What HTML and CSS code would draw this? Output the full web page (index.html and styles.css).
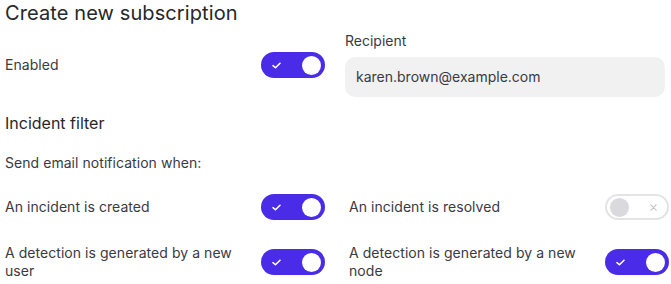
FILE: index.html
```html
<!DOCTYPE html>
<html>
<head>
<meta charset="utf-8">
<link rel="stylesheet" href="styles.css">
</head>
<body>
<div class="page">
  <h1 class="title">Create new subscription</h1>
  <div class="grid">
    <div class="row enabled-row">
      <span class="label">Enabled</span>
      <span class="toggle on"><svg class="check" viewBox="0 0 10 8" width="9" height="7"><path d="M1 4.2 L3.8 6.6 L9 1.4" fill="none" stroke="#fff" stroke-width="1.8" stroke-linecap="round" stroke-linejoin="round"/></svg><span class="knob"></span></span>
    </div>
    <div class="field">
      <div class="field-label">Recipient</div>
      <div class="input">karen.brown@example.com</div>
    </div>
  </div>
  <h2 class="section">Incident filter</h2>
  <p class="hint">Send email notification when:</p>
  <div class="grid options">
    <div class="row">
      <span class="label">An incident is created</span>
      <span class="toggle on"><svg class="check" viewBox="0 0 10 8" width="9" height="7"><path d="M1 4.2 L3.8 6.6 L9 1.4" fill="none" stroke="#fff" stroke-width="1.8" stroke-linecap="round" stroke-linejoin="round"/></svg><span class="knob"></span></span>
    </div>
    <div class="row right">
      <span class="label">An incident is resolved</span>
      <span class="toggle off"><span class="knob"></span><svg class="cross" viewBox="0 0 8 8" width="7" height="7"><path d="M1 1 L7 7 M7 1 L1 7" fill="none" stroke="#c4c4ca" stroke-width="1.4" stroke-linecap="round"/></svg></span>
    </div>
    <div class="row">
      <span class="label">A detection is generated by a new user</span>
      <span class="toggle on"><svg class="check" viewBox="0 0 10 8" width="9" height="7"><path d="M1 4.2 L3.8 6.6 L9 1.4" fill="none" stroke="#fff" stroke-width="1.8" stroke-linecap="round" stroke-linejoin="round"/></svg><span class="knob"></span></span>
    </div>
    <div class="row right">
      <span class="label">A detection is generated by a new node</span>
      <span class="toggle on"><svg class="check" viewBox="0 0 10 8" width="9" height="7"><path d="M1 4.2 L3.8 6.6 L9 1.4" fill="none" stroke="#fff" stroke-width="1.8" stroke-linecap="round" stroke-linejoin="round"/></svg><span class="knob"></span></span>
    </div>
  </div>
</div>
</body>
</html>
```
FILE: styles.css
```css
* { box-sizing: border-box; }
body {
  margin: 0;
  background: #fff;
  font-family: Inter, "Noto Sans", sans-serif;
  color: #3a3a42;
}
.page {
  padding: 0 0 0 5px;
}
.title {
  margin: 0;
  padding-top: 1px;
  font-size: 20px;
  font-weight: 400;
  line-height: 24px;
  color: #27272a;
  letter-spacing: 0.1px;
}
.grid {
  display: grid;
  grid-template-columns: 320px 320px;
  column-gap: 20px;
}
.row {
  display: flex;
  align-items: center;
  justify-content: space-between;
}
.enabled-row {
  align-self: start;
  margin-top: 27px;
}
.label {
  font-size: 14px;
  line-height: 18px;
  max-width: 240px;
  letter-spacing: 0.05px;
}
.field {
  padding-top: 7px;
}
.field-label {
  font-size: 14px;
  line-height: 18px;
  margin-bottom: 7px;
}
.input {
  height: 40px;
  border-radius: 10px;
  background: #f1f1f2;
  font-size: 14px;
  line-height: 40px;
  padding-left: 11px;
  color: #3a3a42;
}
.section {
  margin: 16px 0 0;
  font-size: 16px;
  font-weight: 400;
  line-height: 20px;
  color: #27272a;
}
.hint {
  margin: 21px 0 0;
  font-size: 14px;
  line-height: 18px;
  letter-spacing: 0.05px;
}
.options {
  margin-top: 22px;
  row-gap: 24px;
}
.options .right {
  margin-left: 4px;
  margin-right: -4px;
}
.toggle {
  flex: none;
  width: 64px;
  height: 26px;
  border-radius: 13px;
  display: flex;
  align-items: center;
  justify-content: space-between;
  padding: 0 4px 0 11px;
}
.toggle.on {
  background: #4a2be8;
}
.toggle .knob {
  width: 19px;
  height: 19px;
  border-radius: 50%;
  background: #fff;
}
.toggle.off {
  background: #fff;
  border: 2px solid #e4e4e7;
  padding: 0 10px 0 3px;
}
.toggle.off .knob {
  background: #d9d9de;
}
.check, .cross { display: block; }
```
